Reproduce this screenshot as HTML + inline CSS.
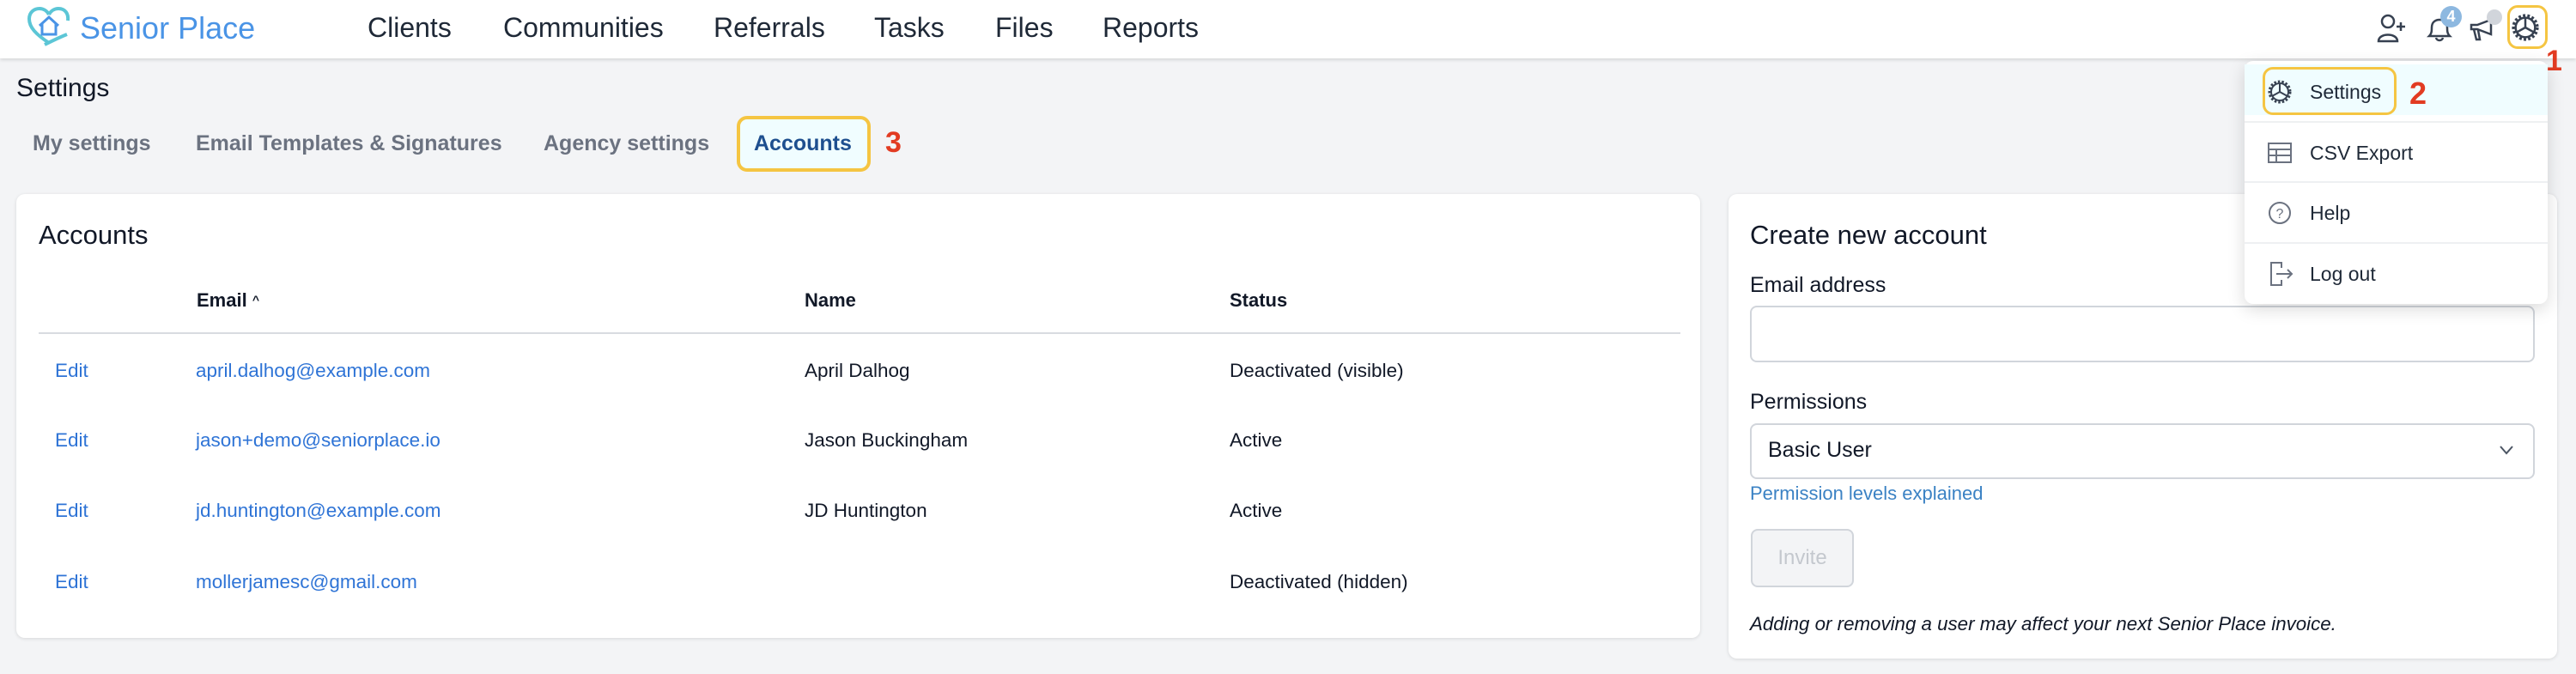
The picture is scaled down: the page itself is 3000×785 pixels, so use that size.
<!DOCTYPE html>
<html><head><meta charset="utf-8"><style>
*{box-sizing:border-box;margin:0;padding:0}
body{width:3000px;height:785px;background:#f3f4f6;font-family:"Liberation Sans",Arial,sans-serif;position:relative;overflow:hidden;color:#111827}
.a{position:absolute;white-space:nowrap}
.hdr{position:absolute;left:0;top:0;width:3000px;height:68px;background:#fff;box-shadow:0 2px 4px rgba(0,0,0,.12)}
.nav{font-size:32px;color:#1f2937;top:14px}
.tab{font-size:25px;color:#6b7280;font-weight:bold;top:153px}
.card{position:absolute;background:#fff;border-radius:10px;box-shadow:0 1px 4px rgba(0,0,0,.12)}
.th{font-size:22px;font-weight:bold;top:337px}
.td{font-size:22.5px}
.blue{color:#2f74d6}
.menu{position:absolute;left:2614px;top:71px;width:353px;height:283px;background:#fff;border-radius:10px;box-shadow:0 6px 20px rgba(0,0,0,.15)}
.mi{font-size:23px;color:#1f2937}
.sep{position:absolute;left:2614px;width:353px;height:2px;background:#eef0f2}
.red{color:#e23b22;font-weight:bold}
</style></head><body>
<div class="hdr"></div>
<svg class="a" style="left:32px;top:8px" width="50" height="46" viewBox="0 0 50 46">
<path d="M25 42 C10 32 2 24 2 14 C2 6 8 2 14 2 C19 2 23 5 25 9" fill="none" stroke="#5cc6d6" stroke-width="4"/>
<path d="M25 9 C27 5 31 2 36 2 C44 2 48 8 47 16" fill="none" stroke="#5cc6d6" stroke-width="4"/>
<path d="M14 22 L25 12 L36 22 M17 20 V32 H33 V20" fill="none" stroke="#4a94e6" stroke-width="3"/>
<path d="M20 44 C28 40 36 36 46 32" fill="none" stroke="#5cc6d6" stroke-width="4"/>
</svg>
<div class="a" style="left:93px;top:12px;font-size:36px;color:#4a94e6">Senior Place</div>
<div class="a nav" style="left:428px">Clients</div>
<div class="a nav" style="left:586px">Communities</div>
<div class="a nav" style="left:831px">Referrals</div>
<div class="a nav" style="left:1018px">Tasks</div>
<div class="a nav" style="left:1159px">Files</div>
<div class="a nav" style="left:1284px">Reports</div>
<svg class="a" style="left:2768px;top:16px" width="36" height="34" viewBox="0 0 36 34"><circle cx="13" cy="9" r="7" fill="none" stroke="#374151" stroke-width="2.5"/><path d="M2 32 C2 22 24 22 24 32 Z" fill="none" stroke="#374151" stroke-width="2.5"/><path d="M28 10 V20 M23 15 H33" stroke="#374151" stroke-width="2.5"/></svg>
<svg class="a" style="left:2825px;top:20px" width="34" height="30" viewBox="0 0 34 30"><path d="M4 22 C7 19 7 16 7 12 C7 6 11 3 16 3 C21 3 25 6 25 12 C25 16 25 19 28 22 Z M12 24 C13 28 19 28 20 24" fill="none" stroke="#374151" stroke-width="2.5"/></svg>
<div class="a" style="left:2842px;top:7px;width:25px;height:25px;border-radius:50%;background:#8db8e0;color:#fff;font-size:18px;text-align:center;line-height:25px;font-weight:bold">4</div>
<svg class="a" style="left:2875px;top:20px" width="34" height="28" viewBox="0 0 34 28"><path d="M3 9 H10 L26 3 V20 L10 14 H3 Z M6 14 L9 26 H13 L11 15" fill="none" stroke="#374151" stroke-width="2.5"/></svg>
<div class="a" style="left:2896px;top:11px;width:18px;height:18px;border-radius:50%;background:#d1d5db"></div>
<div class="a" style="left:2920px;top:6px;width:47px;height:51px;border:3px solid #f5c542;border-radius:12px"></div>
<svg class="a" style="left:2924px;top:15px" width="34" height="34" viewBox="0 0 30 30"><circle cx="15" cy="15" r="12" fill="none" stroke="#374151" stroke-width="3.5" stroke-dasharray="2.5 2"/><circle cx="15" cy="15" r="10" fill="none" stroke="#374151" stroke-width="2.2"/><path d="M15 15 L15 5 M15 15 L24 20 M15 15 L6 20" stroke="#374151" stroke-width="2.2"/></svg>
<div class="a red" style="left:2965px;top:52px;font-size:34px">1</div>

<div class="a" style="left:19px;top:86px;font-size:30px">Settings</div>
<div class="a tab" style="left:38px">My settings</div>
<div class="a tab" style="left:228px">Email Templates &amp; Signatures</div>
<div class="a tab" style="left:633px">Agency settings</div>
<div class="a" style="left:858px;top:135px;width:156px;height:65px;border:4px solid #f5c542;border-radius:12px;background:#f0fdff"></div>
<div class="a tab" style="left:878px;color:#1e4f8f">Accounts</div>
<div class="a red" style="left:1031px;top:147px;font-size:34px">3</div>

<div class="card" style="left:19px;top:226px;width:1961px;height:517px"></div>
<div class="a" style="left:45px;top:256px;font-size:31px">Accounts</div>
<div class="a th" style="left:229px">Email <span style="font-size:14px;vertical-align:3px">^</span></div>
<div class="a th" style="left:937px">Name</div>
<div class="a th" style="left:1432px">Status</div>
<div class="a" style="left:45px;top:387px;width:1912px;height:2px;background:#d8dbe0"></div>

<div class="a td blue" style="left:64px;top:419px">Edit</div>
<div class="a td blue" style="left:228px;top:419px">april.dalhog@example.com</div>
<div class="a td" style="left:937px;top:419px">April Dalhog</div>
<div class="a td" style="left:1432px;top:419px">Deactivated (visible)</div>

<div class="a td blue" style="left:64px;top:500px">Edit</div>
<div class="a td blue" style="left:228px;top:500px">jason+demo@seniorplace.io</div>
<div class="a td" style="left:937px;top:500px">Jason Buckingham</div>
<div class="a td" style="left:1432px;top:500px">Active</div>

<div class="a td blue" style="left:64px;top:582px">Edit</div>
<div class="a td blue" style="left:228px;top:582px">jd.huntington@example.com</div>
<div class="a td" style="left:937px;top:582px">JD Huntington</div>
<div class="a td" style="left:1432px;top:582px">Active</div>

<div class="a td blue" style="left:64px;top:665px">Edit</div>
<div class="a td blue" style="left:228px;top:665px">mollerjamesc@gmail.com</div>
<div class="a td" style="left:1432px;top:665px">Deactivated (hidden)</div>

<div class="card" style="left:2013px;top:226px;width:965px;height:541px"></div>
<div class="a" style="left:2038px;top:256px;font-size:31px">Create new account</div>
<div class="a" style="left:2038px;top:318px;font-size:25px">Email address</div>
<div class="a" style="left:2038px;top:356px;width:914px;height:66px;border:2px solid #d1d5db;border-radius:8px;background:#fff"></div>
<div class="a" style="left:2038px;top:454px;font-size:25px">Permissions</div>
<div class="a" style="left:2038px;top:493px;width:914px;height:65px;border:2px solid #d1d5db;border-radius:8px;background:#fff"></div>
<div class="a" style="left:2059px;top:510px;font-size:25px">Basic User</div>
<svg class="a" style="left:2910px;top:517px" width="18" height="14" viewBox="0 0 18 14"><path d="M2 3 L9 11 L16 3" fill="none" stroke="#4b5563" stroke-width="2"/></svg>
<div class="a" style="left:2038px;top:562px;font-size:22px;color:#3b82c4">Permission levels explained</div>
<div class="a" style="left:2039px;top:616px;width:120px;height:68px;border:2px solid #d1d5db;border-radius:8px;background:#f3f4f6;color:#c4c8ce;font-size:24px;text-align:center;line-height:64px">Invite</div>
<div class="a" style="left:2038px;top:714px;font-size:22.3px;font-style:italic">Adding or removing a user may affect your next Senior Place invoice.</div>

<div class="menu"></div>
<div class="a" style="left:2614px;top:75px;width:353px;height:59px;background:#f0fdff"></div>
<div class="sep" style="top:141px"></div>
<div class="sep" style="top:211px"></div>
<div class="sep" style="top:282px"></div>
<div class="a" style="left:2635px;top:78px;width:156px;height:56px;border:3px solid #f5c542;border-radius:12px"></div>
<svg class="a" style="left:2640px;top:92px" width="30" height="30" viewBox="0 0 30 30"><circle cx="15" cy="15" r="12" fill="none" stroke="#374151" stroke-width="3" stroke-dasharray="2.5 2"/><circle cx="15" cy="15" r="10" fill="none" stroke="#374151" stroke-width="2"/><path d="M15 15 L15 5 M15 15 L24 20 M15 15 L6 20" stroke="#374151" stroke-width="2"/></svg>
<div class="a mi" style="left:2690px;top:94px">Settings</div>
<div class="a red" style="left:2806px;top:88px;font-size:36px">2</div>
<svg class="a" style="left:2641px;top:166px" width="28" height="24" viewBox="0 0 28 24"><rect x="1" y="1" width="26" height="22" fill="none" stroke="#6b7280" stroke-width="2"/><path d="M1 8 H27 M1 15 H27 M10 8 V23" stroke="#6b7280" stroke-width="2"/></svg>
<div class="a mi" style="left:2690px;top:165px">CSV Export</div>
<svg class="a" style="left:2641px;top:234px" width="28" height="28" viewBox="0 0 28 28"><circle cx="14" cy="14" r="12" fill="none" stroke="#6b7280" stroke-width="2"/><text x="14" y="20" font-size="16" text-anchor="middle" fill="#6b7280" font-family="Liberation Sans">?</text></svg>
<div class="a mi" style="left:2690px;top:235px">Help</div>
<svg class="a" style="left:2643px;top:304px" width="28" height="30" viewBox="0 0 28 30"><path d="M14 8 V2 H2 V28 H14 V22 M8 15 H26 M21 10 L26 15 L21 20" fill="none" stroke="#6b7280" stroke-width="2"/></svg>
<div class="a mi" style="left:2690px;top:306px">Log out</div>
</body></html>
